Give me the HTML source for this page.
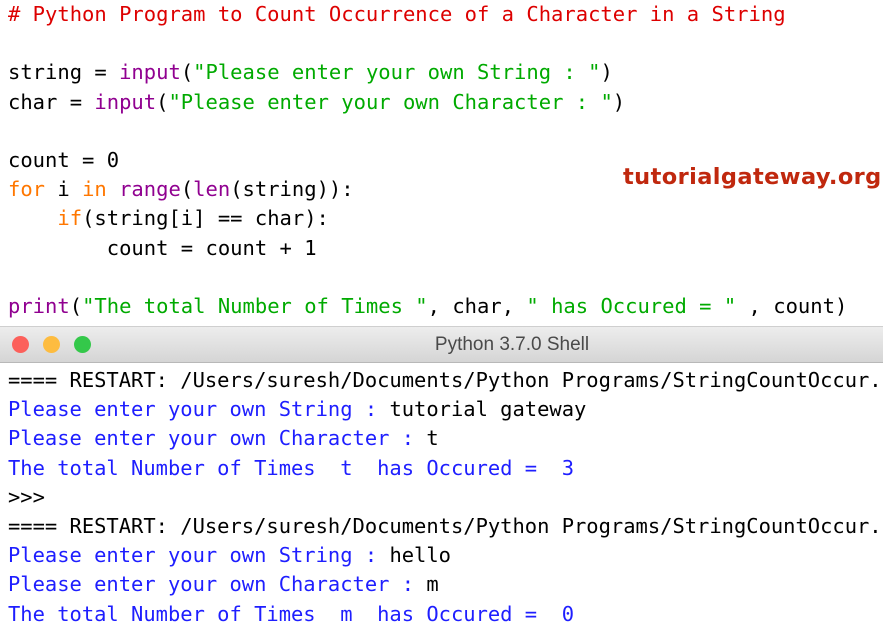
<!DOCTYPE html>
<html><head><style>
body{margin:0;width:883px;height:634px;overflow:hidden;background:#fff;position:relative;font-family:"DejaVu Sans Mono","Liberation Mono",monospace;}
.ed{position:absolute;left:8px;top:0;font-size:20.5px;line-height:29.2px;white-space:pre;color:#000}
.sh{position:absolute;left:8px;top:366px;font-size:20.45px;line-height:29.2px;white-space:pre;color:#000}
.c{color:#dd0000}.b{color:#900090}.s{color:#00aa00}.k{color:#ff7700}.u{color:#1e1eff}
.bar{position:absolute;left:0;top:326px;width:883px;height:35px;background:linear-gradient(#ededed,#d5d5d5);border-top:1px solid #cfcfcf;border-bottom:1px solid #b8b8b8;}
.dot{position:absolute;top:9px;width:17px;height:17px;border-radius:50%}
.ttl{position:absolute;left:0;width:1024px;top:7px;text-align:center;font-family:"Liberation Sans",sans-serif;font-size:19px;color:#4a4a4a}
.logo{position:absolute;left:623px;top:164px;font-family:"DejaVu Sans","Liberation Sans",sans-serif;font-weight:bold;font-size:22.5px;color:#c0280e;letter-spacing:0.4px}
</style></head><body>
<div class="ed"><span class="c"># Python Program to Count Occurrence of a Character in a String</span>

string = <span class="b">input</span>(<span class="s">"Please enter your own String : "</span>)
char = <span class="b">input</span>(<span class="s">"Please enter your own Character : "</span>)

count = 0
<span class="k">for</span> i <span class="k">in</span> <span class="b">range</span>(<span class="b">len</span>(string)):
    <span class="k">if</span>(string[i] == char):
        count = count + 1

<span class="b">print</span>(<span class="s">"The total Number of Times "</span>, char, <span class="s">" has Occured = "</span> , count)</div>
<div class="logo">tutorialgateway.org</div>
<div class="bar">
<div class="dot" style="left:12px;background:#fc605b"></div>
<div class="dot" style="left:43px;background:#fdbc40"></div>
<div class="dot" style="left:74px;background:#34c84a"></div>
<div class="ttl">Python 3.7.0 Shell</div>
</div>
<div class="sh">==== RESTART: /Users/suresh/Documents/Python Programs/StringCountOccur.
<span class="u">Please enter your own String : </span>tutorial gateway
<span class="u">Please enter your own Character : </span>t
<span class="u">The total Number of Times  t  has Occured =  3</span>
&gt;&gt;&gt;
==== RESTART: /Users/suresh/Documents/Python Programs/StringCountOccur.
<span class="u">Please enter your own String : </span>hello
<span class="u">Please enter your own Character : </span>m
<span class="u">The total Number of Times  m  has Occured =  0</span></div>
</body></html>
